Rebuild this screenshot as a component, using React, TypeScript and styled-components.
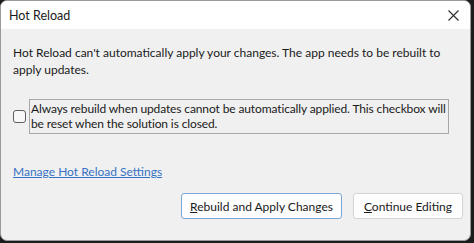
import React from "react";
import styled, { createGlobalStyle } from "styled-components";

const Global = createGlobalStyle`
  html, body { margin: 0; padding: 0; background: #1c1c1c; }
  body { width: 474px; height: 243px; overflow: hidden; }
  * { box-sizing: border-box; }
`;

const Window = styled.div`
  width: 471px;
  height: 241px;
  border: 1px solid #9a9a9a;
  border-radius: 7px;
  overflow: hidden;
  background: #f0f0f0;
  display: flex;
  flex-direction: column;
  font-family: "Lato", "Liberation Sans", sans-serif;
  color: #1a1a1a;
`;

const TitleBar = styled.div`
  height: 28px;
  background: #ffffff;
  display: flex;
  align-items: center;
  justify-content: space-between;
  padding: 0 9px 0 8px;
  font-size: 12.5px;
`;

const CloseButton = styled.div`
  width: 12px;
  height: 12px;
  display: flex;
  align-items: center;
  justify-content: center;
  margin-right: 2px;
`;

const Content = styled.div`
  flex: 1;
  display: flex;
  flex-direction: column;
  padding: 16px 7px 0 12px;
`;

const Message = styled.p`
  margin: 0;
  font-size: 12px;
  line-height: 16.5px;
`;

const CheckRow = styled.div`
  display: flex;
  align-items: center;
  gap: 3px;
  margin-top: 21px;
`;

const CheckBox = styled.span`
  width: 13px;
  height: 13px;
  border: 1px solid #5e5e5e;
  border-radius: 3px;
  background: #f8f8f8;
  flex-shrink: 0;
`;

const CheckLabel = styled.label`
  border: 1px solid #a8a8a8;
  padding: 1px 0 2px 1px;
  font-size: 12px;
  letter-spacing: -0.12px;
  line-height: 15px;
  width: 420px;
`;

const Link = styled.a`
  margin-top: 30px;
  font-size: 12px;
  line-height: 16px;
  color: #3672c4;
  text-decoration: underline;
  align-self: flex-start;
  cursor: pointer;
`;

const ButtonRow = styled.div`
  display: flex;
  justify-content: flex-end;
  gap: 11px;
  margin-top: 13px;
`;

const Button = styled.button<{ $primary?: boolean }>`
  height: 26px;
  padding: 0 8px;
  width: ${(p) => (p.$primary ? "161px" : "110px")};
  white-space: nowrap;
  font-family: inherit;
  font-size: 12px;
  color: #1a1a1a;
  background: #fdfdfd;
  border: 1px solid ${(p) => (p.$primary ? "#7aa7d8" : "#d4d4d4")};
  border-radius: 3px;
`;

const AccessKey = styled.span`
  text-decoration: underline;
`;

export default function App() {
  return (
    <>
      <Global />
      <Window>
        <TitleBar>
          <span>Hot Reload</span>
          <CloseButton>
            <svg width="11" height="11" viewBox="0 0 11 11">
              <path d="M0.5 0.5 L10.5 10.5 M10.5 0.5 L0.5 10.5" stroke="#2b2b2b" strokeWidth="1.1" />
            </svg>
          </CloseButton>
        </TitleBar>
        <Content>
          <Message>
            Hot Reload can't automatically apply your changes. The app needs to be rebuilt to apply updates.
          </Message>
          <CheckRow>
            <CheckBox />
            <CheckLabel>
              Always rebuild when updates cannot be automatically applied. This checkbox will be reset when the
              solution is closed.
            </CheckLabel>
          </CheckRow>
          <Link>Manage Hot Reload Settings</Link>
          <ButtonRow>
            <Button $primary>
              <AccessKey>R</AccessKey>ebuild and Apply Changes
            </Button>
            <Button>
              <AccessKey>C</AccessKey>ontinue Editing
            </Button>
          </ButtonRow>
        </Content>
      </Window>
    </>
  );
}
